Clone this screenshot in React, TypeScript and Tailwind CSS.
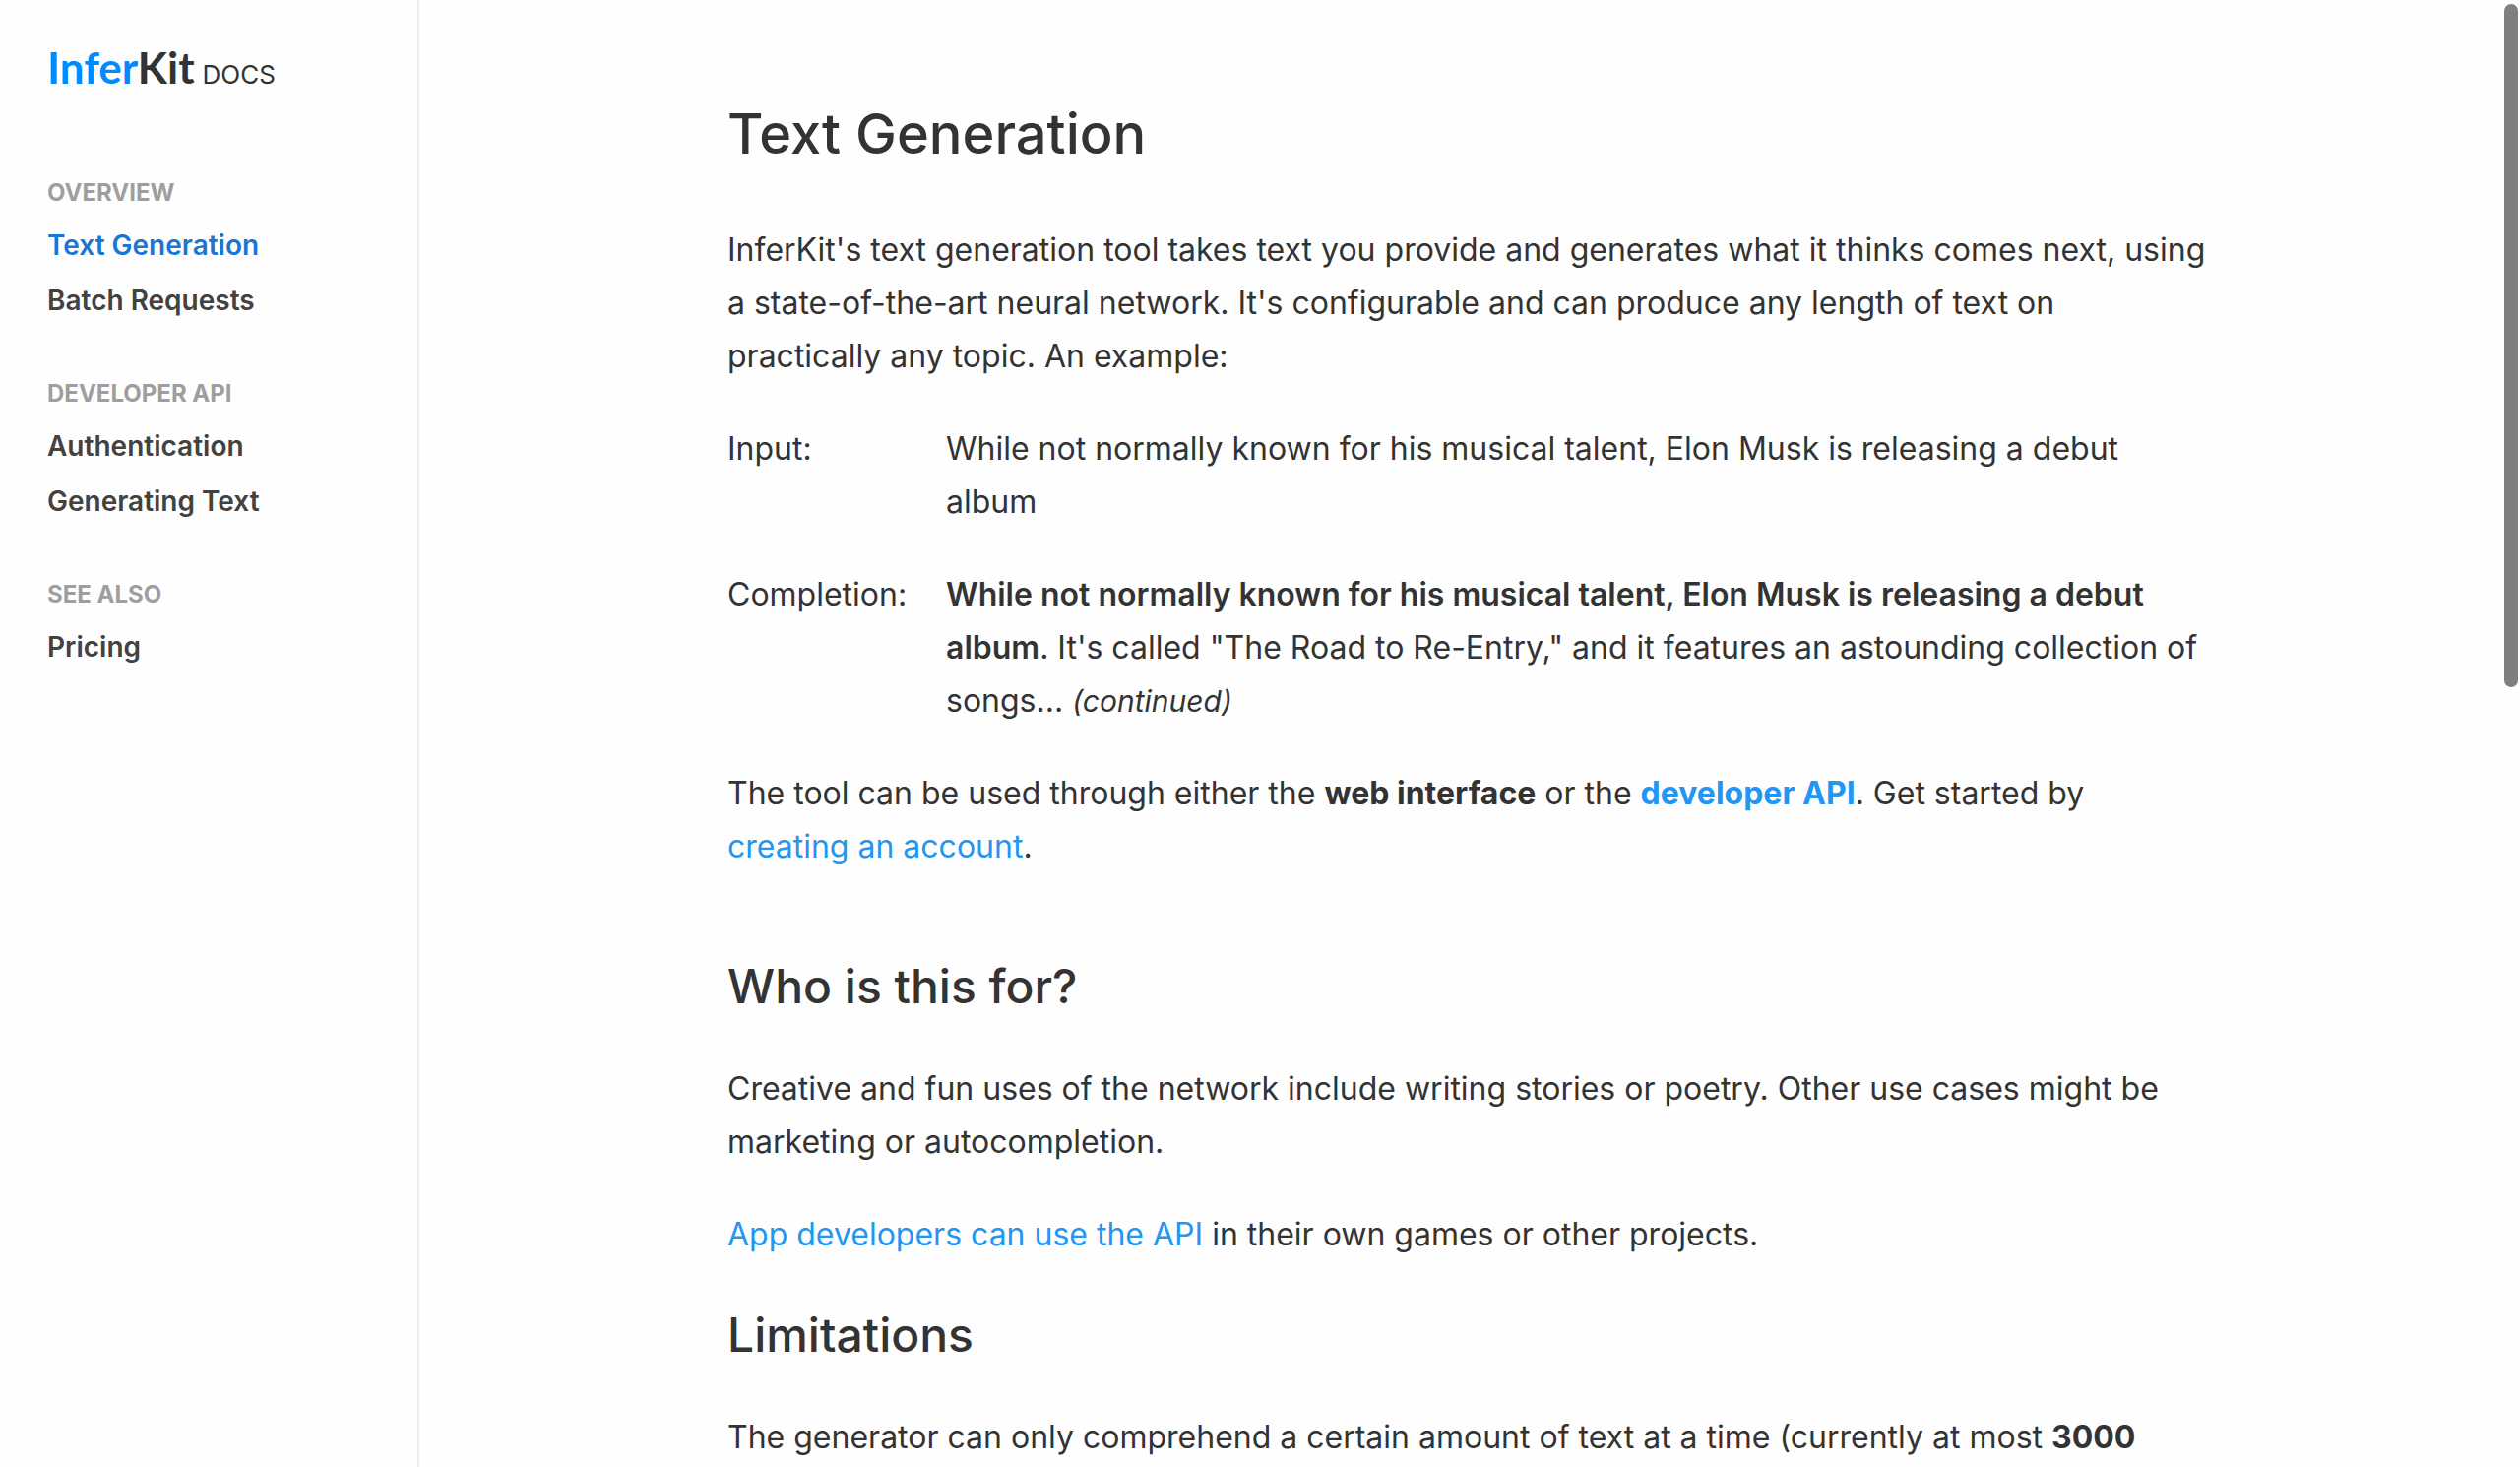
const NAV = [
  {
    title: 'Overview',
    links: [
      { label: 'Text Generation', active: true },
      { label: 'Batch Requests', active: false },
    ],
  },
  {
    title: 'Developer API',
    links: [
      { label: 'Authentication', active: false },
      { label: 'Generating Text', active: false },
    ],
  },
  {
    title: 'See also',
    links: [{ label: 'Pricing', active: false }],
  },
]

function Sidebar() {
  return (
    <aside className="w-[426px] shrink-0 border-r-2 border-[#eeeeee] px-12 pt-9">
      <a href="#" className="flex items-baseline gap-2 leading-[64px]">
        <span className="font-['Lato'] text-[44px] font-bold text-[#333333]">
          <span className="text-[#008cff]">Infer</span>Kit
        </span>
        <span className="text-[26px]">DOCS</span>
      </a>

      <nav className="mt-[63px] flex flex-col gap-[42px]">
        {NAV.map((group) => (
          <div key={group.title}>
            <h2 className="text-[24px] leading-[50px] font-bold text-[#9e9e9e] uppercase">{group.title}</h2>
            <ul>
              {group.links.map((link) => (
                <li key={link.label}>
                  <a
                    href="#"
                    className={`block text-[28px] leading-[56px] font-semibold ${
                      link.active ? 'text-[#1976d2]' : 'text-[#424242]'
                    }`}
                  >
                    {link.label}
                  </a>
                </li>
              ))}
            </ul>
          </div>
        ))}
      </nav>
    </aside>
  )
}

export default function App() {
  return (
    <div className="flex min-h-screen bg-[#fefefe] font-['Inter',sans-serif] text-[#333333]">
      <Sidebar />

      <main className="min-w-0 flex-1 px-12 pt-24 text-[32px] leading-[54px]">
        <article className="mx-auto max-w-[1508px]">
          <h1 className="mb-[51px] text-[56px] leading-[80px] font-medium">Text Generation</h1>

          <div className="flex flex-col gap-10">
            <p>
              InferKit's text generation tool takes text you provide and generates what it thinks comes next, using a
              state-of-the-art neural network. It's configurable and can produce any length of text on practically any
              topic. An example:
            </p>

            {/* Example */}
            <dl className="grid grid-cols-[222px_1fr] gap-y-10">
              <dt>Input:</dt>
              <dd>While not normally known for his musical talent, Elon Musk is releasing a debut album</dd>
              <dt>Completion:</dt>
              <dd>
                <b className="font-semibold">
                  While not normally known for his musical talent, Elon Musk is releasing a debut album
                </b>
                . It's called "The Road to Re-Entry," and it features an astounding collection of songs...{' '}
                <i className="text-[30px]">(continued)</i>
              </dd>
            </dl>

            <p>
              The tool can be used through either the <b className="font-bold">web interface</b> or the{' '}
              <a href="#" className="font-bold text-[#2196f3]">
                developer API
              </a>
              . Get started by{' '}
              <a href="#" className="text-[#2196f3]">
                creating an account
              </a>
              .
            </p>
          </div>

          <h2 className="mt-[85px] mb-[47px] text-[48px] leading-[60px] font-medium">Who is this for?</h2>
          <div className="flex flex-col gap-10">
            <p>
              Creative and fun uses of the network include writing stories or poetry. Other use cases might be marketing
              or autocompletion.
            </p>
            <p>
              <a href="#" className="text-[#2196f3]">
                App developers can use the API
              </a>{' '}
              in their own games or other projects.
            </p>
          </div>

          <h2 className="mt-[45px] mb-[47px] text-[48px] leading-[60px] font-medium">Limitations</h2>
          <p>
            The generator can only comprehend a certain amount of text at a time (currently at most{' '}
            <b className="font-bold">3000</b>
          </p>
        </article>
      </main>

      {/* Scroll thumb */}
      <div className="fixed top-1 right-0.5 h-[694px] w-3.5 rounded-full bg-[#7f7f7f]" />
    </div>
  )
}
